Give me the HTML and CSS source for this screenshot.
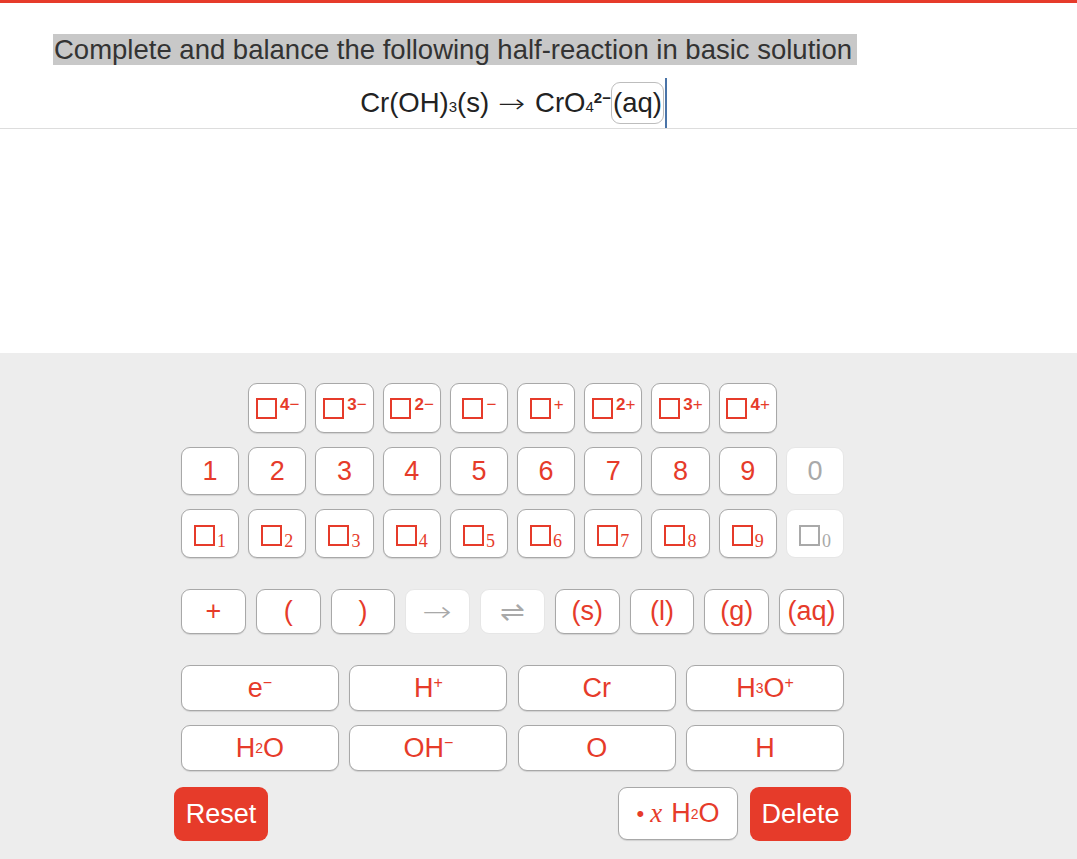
FILE: index.html
```html
<!DOCTYPE html>
<html>
<head>
<meta charset="utf-8">
<link rel="stylesheet" href="styles.css">
</head>
<body>
<div class="topbar"></div>
<div class="col">
  <div class="title"><span class="hl">Complete and balance the following half-reaction in basic solution</span></div>
  <div class="equation">
    <span>Cr(OH)<span class="esub">3</span>(s)<span class="earrow">→</span>CrO<span class="esub">4</span><span class="esup">2−</span></span><span class="aq">(aq)</span><span class="caret"></span>
  </div>
</div>
<div class="rule"></div>
<div class="blank"></div>
<div class="panel">
  <div class="pad">
    <div class="grid10">
      <span></span>
      <button class="key"><span class="ion"><span class="sq"></span><span class="sup"><b>4</b>−</span></span></button>
      <button class="key"><span class="ion"><span class="sq"></span><span class="sup"><b>3</b>−</span></span></button>
      <button class="key"><span class="ion"><span class="sq"></span><span class="sup"><b>2</b>−</span></span></button>
      <button class="key"><span class="ion"><span class="sq"></span><span class="sup">−</span></span></button>
      <button class="key"><span class="ion"><span class="sq"></span><span class="sup">+</span></span></button>
      <button class="key"><span class="ion"><span class="sq"></span><span class="sup"><b>2</b>+</span></span></button>
      <button class="key"><span class="ion"><span class="sq"></span><span class="sup"><b>3</b>+</span></span></button>
      <button class="key"><span class="ion"><span class="sq"></span><span class="sup"><b>4</b>+</span></span></button>
      <span></span>

      <button class="key">1</button>
      <button class="key">2</button>
      <button class="key">3</button>
      <button class="key">4</button>
      <button class="key">5</button>
      <button class="key">6</button>
      <button class="key">7</button>
      <button class="key">8</button>
      <button class="key">9</button>
      <button class="key off">0</button>

      <button class="key"><span class="subk"><span class="sq"></span><span class="snum">1</span></span></button>
      <button class="key"><span class="subk"><span class="sq"></span><span class="snum">2</span></span></button>
      <button class="key"><span class="subk"><span class="sq"></span><span class="snum">3</span></span></button>
      <button class="key"><span class="subk"><span class="sq"></span><span class="snum">4</span></span></button>
      <button class="key"><span class="subk"><span class="sq"></span><span class="snum">5</span></span></button>
      <button class="key"><span class="subk"><span class="sq"></span><span class="snum">6</span></span></button>
      <button class="key"><span class="subk"><span class="sq"></span><span class="snum">7</span></span></button>
      <button class="key"><span class="subk"><span class="sq"></span><span class="snum">8</span></span></button>
      <button class="key"><span class="subk"><span class="sq"></span><span class="snum">9</span></span></button>
      <button class="key off"><span class="subk"><span class="sq"></span><span class="snum">0</span></span></button>
    </div>

    <div class="grid9">
      <button class="key">+</button>
      <button class="key">(</button>
      <button class="key">)</button>
      <button class="key off"><span class="arrow">→</span></button>
      <button class="key off"><span class="arrow eq">⇌</span></button>
      <button class="key">(s)</button>
      <button class="key">(l)</button>
      <button class="key">(g)</button>
      <button class="key">(aq)</button>
    </div>

    <div class="grid4">
      <button class="key">e<span class="csup">−</span></button>
      <button class="key">H<span class="csup">+</span></button>
      <button class="key">Cr</button>
      <button class="key">H<span class="csub">3</span>O<span class="csup">+</span></button>
      <button class="key">H<span class="csub">2</span>O</button>
      <button class="key">OH<span class="csup">−</span></button>
      <button class="key">O</button>
      <button class="key">H</button>
    </div>

    <div class="actions">
      <button class="btn-red reset">Reset</button>
      <span class="spacer"></span>
      <button class="key water"><span class="dot">•</span><span class="ix">x</span>H<span class="csub">2</span>O</button>
      <button class="btn-red delete">Delete</button>
    </div>
  </div>
</div>
</body>
</html>
```

FILE: styles.css
```css
html, body {
  margin: 0;
  padding: 0;
  background: #fff;
  font-family: "Liberation Sans", Arial, sans-serif;
}

.topbar {
  height: 3px;
  background: #e63b2a;
}

.col {
  width: 1025px;
}

.title {
  margin: 30px 0 0 53px;
  font-size: 27.5px;
  line-height: 33px;
  color: #333;
}

.hl {
  background: #c8c8c8;
  padding: 0 5px 0 1px;
}

.equation {
  height: 50px;
  margin-top: 12px;
  display: flex;
  justify-content: center;
  align-items: center;
  font-size: 27.5px;
  color: #222;
  padding-left: 2px;
}

.esub {
  font-size: 15px;
}

.esup {
  font-size: 15px;
  font-weight: bold;
  vertical-align: 9px;
}

.earrow {
  display: inline-block;
  font-family: "DejaVu Sans", sans-serif;
  font-weight: 200;
  font-size: 25px;
  transform: scaleX(1.3);
  margin: 0 13px 0 12px;
}

.aq {
  display: inline-block;
  border: 1px solid #bdbdbd;
  border-radius: 9px;
  line-height: 40px;
  padding: 0 1px;
}

.caret {
  display: inline-block;
  width: 2px;
  height: 50px;
  background: #4a74a8;
  margin-left: 1px;
}

.rule {
  border-top: 1px solid #dddddd;
}

.blank {
  height: 224px;
}

.panel {
  background: #ededed;
  padding-bottom: 18px;
}

.pad {
  width: 663px;
  margin-left: 181px;
  padding-top: 30px;
  display: flex;
  flex-direction: column;
}

.key {
  background: #fff;
  border: 1px solid #a8a8a8;
  border-radius: 9px;
  box-shadow: 0 1px 1px rgba(0, 0, 0, 0.12);
  color: #e63b2a;
  font-family: "Liberation Sans", Arial, sans-serif;
  font-size: 27px;
  padding: 0;
  margin: 0;
  display: flex;
  align-items: center;
  justify-content: center;
  line-height: 1;
}

.key.off {
  color: #a9a9a9;
  border-color: #e6e6e6;
  box-shadow: none;
}

.grid10 {
  display: grid;
  grid-template-columns: repeat(10, 1fr);
  grid-template-rows: 50px 48px 49px;
  column-gap: 9px;
  row-gap: 14px;
}

.ion {
  display: inline-flex;
  align-items: flex-start;
  margin-left: 1px;
}

.sq {
  width: 21px;
  height: 21px;
  border: 2px solid currentColor;
  box-sizing: border-box;
}

.sup {
  font-size: 17px;
  line-height: 1;
  margin-left: 3px;
  margin-top: -2px;
}

.sup b {
  font-weight: bold;
}

.subk {
  display: inline-flex;
  align-items: flex-end;
  margin-top: 4px;
}

.snum {
  font-family: "Liberation Serif", "Times New Roman", serif;
  font-size: 18px;
  line-height: 1;
  margin-left: 2px;
  margin-bottom: -4px;
}

.grid9 {
  margin-top: 31px;
  display: grid;
  grid-template-columns: repeat(9, 1fr);
  grid-template-rows: 45px;
  column-gap: 10px;
}

.arrow {
  display: inline-block;
  font-family: "DejaVu Sans", sans-serif;
  font-weight: 200;
  font-size: 27px;
  transform: scaleX(1.3);
}

.arrow.eq {
  transform: scaleX(1.1);
}

.grid4 {
  margin-top: 31px;
  display: grid;
  grid-template-columns: repeat(4, 1fr);
  grid-template-rows: 46px 46px;
  column-gap: 10.5px;
  row-gap: 14px;
}

.csub {
  font-size: 14px;
}

.csup {
  font-size: 16px;
  align-self: flex-start;
  margin-top: 9px;
}

.actions {
  margin: 16px -7px 0 -7px;
  display: flex;
  height: 54px;
}

.spacer {
  flex: 1;
}

.btn-red {
  background: #e63b2a;
  color: #fff;
  border: none;
  border-radius: 9px;
  font-family: "Liberation Sans", Arial, sans-serif;
  font-size: 27px;
  padding: 0;
  margin: 0;
}

.reset {
  width: 94px;
}

.delete {
  width: 101px;
  margin-left: 12px;
}

.water {
  width: 120px;
  height: 53px;
}

.dot {
  font-size: 22px;
  margin-right: 6px;
}

.ix {
  font-family: "Liberation Serif", "Times New Roman", serif;
  font-style: italic;
  margin-right: 9px;
}
```
